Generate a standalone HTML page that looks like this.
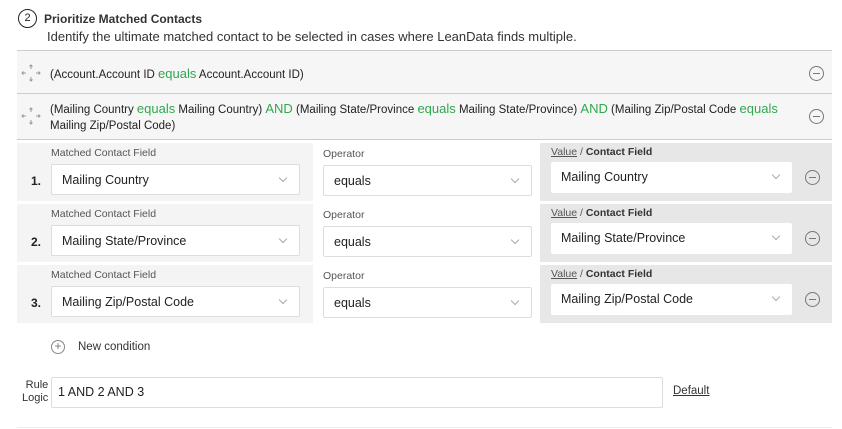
<html><head><style>
body{margin:0;width:842px;height:429px;background:#fff;font-family:"Liberation Sans",sans-serif;color:#222;position:relative;overflow:hidden}
.a{position:absolute}
.g{color:#2fa84f}
.sel{position:absolute;background:#fff;border:1px solid #ddd;border-radius:2px;height:31px;box-sizing:border-box;font-size:12.5px;line-height:30px;padding-left:10px}
.sel:after{content:"";position:absolute;right:13px;top:10px;width:5px;height:5px;border-right:1px solid #aaa;border-bottom:1px solid #aaa;transform:rotate(45deg)}
.lbl{position:absolute;font-size:10.5px;color:#555}
.minus{position:absolute;width:15px;height:15px;border:1px solid #777;border-radius:50%;box-sizing:border-box}
.minus:after{content:"";position:absolute;left:3px;right:3px;top:6px;height:1px;background:#777}
.mv{position:absolute}
</style></head><body>
<div class="a" style="left:18px;top:9px;width:19px;height:19px;border:1px solid #222;border-radius:50%;box-sizing:border-box;font-size:11px;text-align:center;line-height:17px">2</div>
<div class="a" style="left:44px;top:12px;font-size:12px;font-weight:bold;color:#333">Prioritize Matched Contacts</div>
<div class="a" style="left:47px;top:29px;font-size:13px;color:#333">Identify the ultimate matched contact to be selected in cases where LeanData finds multiple.</div>

<div class="a" style="left:17px;top:50px;width:815px;height:88px;background:#f6f6f6;border-top:1px solid #ccc;border-bottom:1px solid #ccc"></div>
<div class="a" style="left:17px;top:93px;width:815px;height:1px;background:#ccc"></div>
<svg class="mv" style="left:21px;top:64px" width="20" height="18" viewBox="0 0 20 18" fill="none" stroke="#999" stroke-width="1"><path d="M10 1v4M8.5 2.5L10 1l1.5 1.5M10 13v4M8.5 15.5L10 17l1.5-1.5M1 9h4M2.5 7.5L1 9l1.5 1.5M15 9h4M17.5 7.5L19 9l-1.5 1.5"/></svg>
<div class="a" style="left:50px;top:66px;font-size:11.5px">(Account.Account ID <span class="g" style="font-size:13px">equals</span> Account.Account ID)</div>
<div class="minus" style="left:809px;top:66px"></div>
<svg class="mv" style="left:21px;top:107px" width="20" height="18" viewBox="0 0 20 18" fill="none" stroke="#999" stroke-width="1"><path d="M10 1v4M8.5 2.5L10 1l1.5 1.5M10 13v4M8.5 15.5L10 17l1.5-1.5M1 9h4M2.5 7.5L1 9l1.5 1.5M15 9h4M17.5 7.5L19 9l-1.5 1.5"/></svg>
<div class="a" style="left:50px;top:101px;font-size:11.5px;line-height:16px;width:740px">(Mailing Country <span class="g" style="font-size:13px">equals</span> Mailing Country) <span class="g" style="font-size:13px">AND</span> (Mailing State/Province <span class="g" style="font-size:13px">equals</span> Mailing State/Province) <span class="g" style="font-size:13px">AND</span> (Mailing Zip/Postal Code <span class="g" style="font-size:13px">equals</span> Mailing Zip/Postal Code)</div>
<div class="minus" style="left:809px;top:109px"></div>

<div class="a" style="left:17px;top:143px;width:296px;height:58px;background:#f4f4f4"></div>
<div class="a" style="left:540px;top:143px;width:292px;height:58px;background:#e7e7e7"></div>
<div class="a" style="left:17px;top:204px;width:296px;height:58px;background:#f4f4f4"></div>
<div class="a" style="left:540px;top:204px;width:292px;height:58px;background:#e7e7e7"></div>
<div class="a" style="left:17px;top:265px;width:296px;height:58px;background:#f4f4f4"></div>
<div class="a" style="left:540px;top:265px;width:292px;height:58px;background:#e7e7e7"></div>

<div class="lbl" style="left:51px;top:147px">Matched Contact Field</div>
<div class="a" style="left:31px;top:174px;font-size:12px;font-weight:bold">1.</div>
<div class="sel" style="left:51px;top:164px;width:249px">Mailing Country</div>
<div class="lbl" style="left:323px;top:148px">Operator</div>
<div class="sel" style="left:323px;top:165px;width:209px">equals</div>
<div class="lbl" style="left:551px;top:146px"><u>Value</u> / <b style="color:#333">Contact Field</b></div>
<div class="sel" style="left:551px;top:162px;width:241px;border:none">Mailing Country</div>
<div class="minus" style="left:805px;top:170px"></div>

<div class="lbl" style="left:51px;top:208px">Matched Contact Field</div>
<div class="a" style="left:31px;top:235px;font-size:12px;font-weight:bold">2.</div>
<div class="sel" style="left:51px;top:225px;width:249px">Mailing State/Province</div>
<div class="lbl" style="left:323px;top:209px">Operator</div>
<div class="sel" style="left:323px;top:226px;width:209px">equals</div>
<div class="lbl" style="left:551px;top:207px"><u>Value</u> / <b style="color:#333">Contact Field</b></div>
<div class="sel" style="left:551px;top:223px;width:241px;border:none">Mailing State/Province</div>
<div class="minus" style="left:805px;top:231px"></div>

<div class="lbl" style="left:51px;top:269px">Matched Contact Field</div>
<div class="a" style="left:31px;top:296px;font-size:12px;font-weight:bold">3.</div>
<div class="sel" style="left:51px;top:286px;width:249px">Mailing Zip/Postal Code</div>
<div class="lbl" style="left:323px;top:270px">Operator</div>
<div class="sel" style="left:323px;top:287px;width:209px">equals</div>
<div class="lbl" style="left:551px;top:268px"><u>Value</u> / <b style="color:#333">Contact Field</b></div>
<div class="sel" style="left:551px;top:284px;width:241px;border:none">Mailing Zip/Postal Code</div>
<div class="minus" style="left:805px;top:292px"></div>

<div class="a" style="left:51px;top:340px;width:14px;height:14px;border:1px solid #888;border-radius:50%;box-sizing:border-box;font-size:12px;line-height:11px;text-align:center;color:#777">+</div>
<div class="a" style="left:78px;top:341px;font-size:11.5px;color:#333">New condition</div>

<div class="a" style="left:22px;top:379px;font-size:11px;line-height:13px;text-align:right;color:#333">Rule<br>Logic</div>
<div class="a" style="left:51px;top:377px;width:612px;height:31px;border:1px solid #ddd;border-radius:2px;box-sizing:border-box;font-size:12.5px;line-height:29px;padding-left:6px">1 AND 2 AND 3</div>
<div class="a" style="left:673px;top:385px;font-size:11.5px;text-decoration:underline;color:#333">Default</div>
<div class="a" style="left:17px;top:427px;width:815px;height:1px;background:#eee"></div>
</body></html>
